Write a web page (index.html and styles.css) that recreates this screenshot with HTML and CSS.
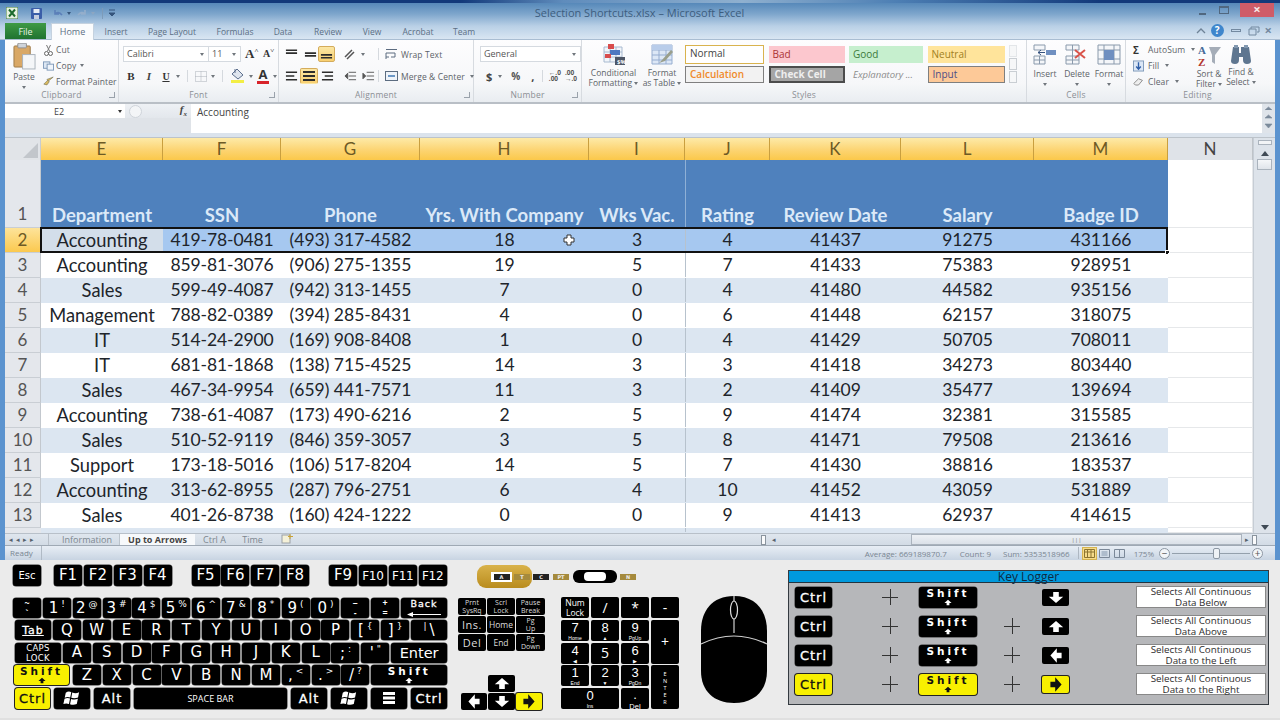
FILE: index.html
```html
<!DOCTYPE html>
<html lang="en">
<head>
<meta charset="utf-8">
<title>Selection Shortcuts.xlsx - Microsoft Excel</title>
<link rel="stylesheet" href="styles.css">
</head>
<body>
<svg class="sprite" width="0" height="0">
  <symbol id="arrow" viewBox="0 0 20 16"><path d="M10 1 19 9H13.500V15H6.500V9H1Z" fill="currentColor"/></symbol>
  <symbol id="win" viewBox="0 0 20 18"><path d="M3 3Q6 1 9.200 2.400L8 8.400Q5 7.200 1.800 8.600ZM10.300 2.800Q14 4.500 18 2.600L16.800 8.400Q13 10 9.200 8.800ZM1.600 9.800Q5 8.400 7.800 9.600L6.600 15.800Q3.500 14.400 .3 15.800ZM9 10Q13 11.400 16.600 9.800L15.400 15.800Q11.500 17.400 7.800 16Z" fill="currentColor"/></symbol>
  <symbol id="lines" viewBox="0 0 14 12"><path d="M1 2H13M1 6H13M1 10H13" stroke="#2d2d2d" stroke-width="1.800"/></symbol>
</svg>

<div class="chrome">
  <div class="titlebar">
    <div class="qat">
      <svg width="12" height="12" viewBox="0 0 12 12"><rect width="12" height="12" fill="#e8f2e0" stroke="#3f7a3f"/><path d="M3 2.500 9 9.500M9 2.500 3 9.500" stroke="#1d6b2e" stroke-width="2"/></svg>
      <svg width="11" height="11" viewBox="0 0 11 11"><rect width="11" height="11" rx="1" fill="#3b5ea8"/><rect x="2.500" y="1" width="6" height="4" fill="#e6ecf5"/><rect x="3" y="7" width="5" height="4" fill="#c6cfdf"/></svg>
      <svg width="10" height="9" viewBox="0 0 10 9"><path d="M2 1V5H6M2 5Q5 1.500 9 6" fill="none" stroke="#5b7fb8" stroke-width="1.600"/></svg>
      <span class="qat-drop"></span>
      <svg width="10" height="9" viewBox="0 0 10 9"><path d="M8 1V5H4M8 5Q5 1.500 1 6" fill="none" stroke="#94aecb" stroke-width="1.600"/></svg>
      <span class="qat-drop faint"></span>
      <span class="qat-sep"></span>
      <svg width="8" height="8" viewBox="0 0 8 8"><path d="M1 1H7M1 4 4 7 7 4Z" fill="#35557c" stroke="#35557c"/></svg>
    </div>
    <div class="doc-title">Selection Shortcuts.xlsx – Microsoft Excel</div>
    <div class="winctl">
      <span class="wc-min"></span>
      <span class="wc-max"></span>
      <span class="wc-close">×</span>
    </div>
  </div>
  <div class="tabbar">
    <span class="tab tab-file">File</span>
    <span class="tab tab-home">Home</span>
    <span class="tab t-insert">Insert</span>
    <span class="tab t-layout">Page Layout</span>
    <span class="tab t-formulas">Formulas</span>
    <span class="tab t-data">Data</span>
    <span class="tab t-review">Review</span>
    <span class="tab t-view">View</span>
    <span class="tab t-acro">Acrobat</span>
    <span class="tab t-team">Team</span>
    <div class="tab-right">
      <svg width="10" height="8" viewBox="0 0 10 8"><path d="M1 6 5 2 9 6" fill="none" stroke="#6f8397" stroke-width="1.300"/></svg>
      <span class="help">?</span>
      <span class="mini-min"></span>
      <svg width="12" height="10" viewBox="0 0 12 10"><path d="M3 3V1H11V6H9M1 3H8V9H1Z" fill="none" stroke="#7389a0"/></svg>
      <span class="mini-x">×</span>
    </div>
  </div>
</div>

<div class="frame">
  <div class="ribbon">
    <section class="group g-clip">
      <div class="gbody">
        <div class="bigbtn paste">
          <svg width="23" height="27" viewBox="0 0 24 28"><rect x="1" y="3" width="17" height="22" rx="1" fill="#d9a866" stroke="#9d7a48"/><rect x="5" y="0" width="9" height="5" rx="1" fill="#cfd4da" stroke="#8d8d8d"/><rect x="10" y="12" width="13" height="15" fill="#f4f6f8" stroke="#a9b2bb"/></svg>
          <span>Paste</span><i class="drop"></i>
        </div>
        <div class="smallcol">
          <div class="sbtn"><svg width="10" height="12" viewBox="0 0 10 12"><path d="M3 1 6 7M7 1 4 7" stroke="#777" /><circle cx="3" cy="9.500" r="2" fill="none" stroke="#666"/><circle cx="7" cy="9.500" r="2" fill="none" stroke="#666"/></svg>Cut</div>
          <div class="sbtn"><svg width="12" height="10" viewBox="0 0 12 10"><rect x=".5" y=".5" width="7" height="7" fill="#dde7f3" stroke="#7d98b8"/><rect x="4.500" y="3" width="7" height="6.500" fill="#f0f5fb" stroke="#7d98b8"/></svg>Copy <i class="drop"></i></div>
          <div class="sbtn"><svg width="14" height="12" viewBox="0 0 14 12"><path d="M13 1 7 6 5 4ZM6 5 1 10 5 11 8 7Z" fill="#d8b85f" stroke="#6a6a50" stroke-width=".7"/></svg>Format Painter</div>
        </div>
      </div>
      <div class="glabel">Clipboard<i class="launch"></i></div>
    </section>

    <section class="group g-font">
      <div class="gbody col">
        <div class="frow">
          <div class="combo c-fn">Calibri<i class="drop"></i></div>
          <div class="combo c-fs">11<i class="drop"></i></div>
          <span class="fontgrow">A<sup>˄</sup></span>
          <span class="fontshrink">A<sup>˅</sup></span>
        </div>
        <div class="frow r2">
          <b class="fb">B</b><i class="fi">I</i><u class="fu">U</u><i class="drop d1"></i>
          <span class="vsep"></span>
          <svg width="12" height="11" viewBox="0 0 12 11"><path d="M.5.500H11.500V10.500H.5ZM6 .5V10.500M.5 5.500H11.500" fill="none" stroke="#aab1b8" stroke-dasharray="1 1"/></svg><i class="drop d2"></i>
          <span class="vsep"></span>
          <svg width="15" height="16" viewBox="0 0 15 16"><path d="M7 1 13 7 8 11 2 6Z" fill="#dfe5ee" stroke="#5d6f8d"/><path d="M5 1V5" stroke="#5d6f8d"/><rect x="1" y="12" width="13" height="3" fill="#f3ee45"/></svg><i class="drop d3"></i>
          <span class="colorA">A</span><i class="drop d4"></i>
        </div>
      </div>
      <div class="glabel">Font<i class="launch"></i></div>
    </section>

    <section class="group g-align">
      <div class="gbody col">
        <div class="frow">
          <svg class="ai" width="13" height="12" viewBox="0 0 14 12"><path d="M1 2H13M1 5H13" stroke="#2d2d2d" stroke-width="1.800"/></svg>
          <svg class="ai" width="13" height="12" viewBox="0 0 14 12"><path d="M1 5H13M1 8H13" stroke="#2d2d2d" stroke-width="1.800"/></svg>
          <span class="ai-on"><svg width="13" height="12" viewBox="0 0 14 12"><path d="M1 7H13M1 10H13" stroke="#2d2d2d" stroke-width="1.800"/></svg></span>
          <svg class="orient" width="16" height="12" viewBox="0 0 16 12"><path d="M2 9 9 2M4 11 11 4" stroke="#555" stroke-width="1.500"/></svg><i class="drop"></i>
          <span class="vsep"></span>
          <div class="sbtn wrap"><svg width="13" height="12" viewBox="0 0 13 12"><path d="M1 1.500H12M1 5H10V9H6M1 9H4M1 5V11" fill="none" stroke="#5c6c80"/></svg>Wrap Text</div>
        </div>
        <div class="frow r2">
          <svg class="ai" width="13" height="12" viewBox="0 0 14 12"><path d="M1 2H13M1 6H10M1 10H13" stroke="#2d2d2d" stroke-width="1.600"/></svg>
          <span class="ai-on c"><svg width="14" height="12" viewBox="0 0 14 12"><use href="#lines"/></svg></span>
          <svg class="ai" width="13" height="12" viewBox="0 0 14 12"><path d="M1 2H13M4 6H13M1 10H13" stroke="#2d2d2d" stroke-width="1.600"/></svg>
          <svg class="ind1" width="13" height="12" viewBox="0 0 14 12"><path d="M5 2H13M5 6H13M5 10H13M1 6 4 3V9Z" fill="#555" stroke="#555"/></svg>
          <svg class="ind2" width="13" height="12" viewBox="0 0 14 12"><path d="M5 2H13M5 6H13M5 10H13M4 6 1 3V9Z" fill="#555" stroke="#555"/></svg>
          <span class="vsep"></span>
          <div class="sbtn wrap"><svg width="13" height="12" viewBox="0 0 13 12"><rect x=".5" y="1.500" width="12" height="9" fill="#eef3f9" stroke="#5c6c80"/><path d="M3 6H10" stroke="#3f78b5" stroke-width="1.500"/></svg>Merge &amp; Center <i class="drop"></i></div>
        </div>
      </div>
      <div class="glabel">Alignment<i class="launch"></i></div>
    </section>

    <section class="group g-num">
      <div class="gbody col">
        <div class="frow"><div class="combo c-num">General<i class="drop"></i></div></div>
        <div class="frow r2 numtools">
          <b class="dollar">$</b><i class="drop"></i>
          <b class="pct">%</b>
          <b class="comma">,</b>
          <span class="vsep"></span>
          <small class="dec">←.0<br>.00</small>
          <small class="dec">.00<br>→.0</small>
        </div>
      </div>
      <div class="glabel">Number<i class="launch"></i></div>
    </section>

    <section class="group g-styles">
      <div class="gbody">
        <div class="bigbtn cf">
          <svg width="24" height="21" viewBox="0 0 24 21"><path d="M2 3H20V18H2ZM2 8H20M2 13H20M8 3V18M14 3V18" fill="#f1f5fa" stroke="#a8bad0"/><rect x="6" y="0" width="6" height="5" fill="#d84c4c"/><rect x="8" y="6" width="10" height="5" fill="#4d77c0"/><rect x="3" y="10" width="6" height="4" fill="#d84c4c"/><rect x="13" y="13" width="10" height="8" fill="#4d5666"/><text x="15" y="20" class="svgt">$%</text></svg>
          <span>Conditional<br>Formatting <i class="drop"></i></span>
        </div>
        <div class="bigbtn ft">
          <svg width="24" height="21" viewBox="0 0 24 21"><path d="M2 1H22V20H2ZM2 6H22M2 11H22M2 16H22M9 1V20M16 1V20" fill="#dce7f6" stroke="#96add0"/><rect x="2" y="1" width="20" height="5" fill="#b9cdea"/><path d="M21 6 12 16 9 19 15 17 23 8Z" fill="#9a9f8c"/></svg>
          <span>Format<br>as Table <i class="drop"></i></span>
        </div>
        <div class="gallery">
          <div class="stl s-normal">Normal</div>
          <div class="stl s-bad">Bad</div>
          <div class="stl s-good">Good</div>
          <div class="stl s-neutral">Neutral</div>
          <div class="stl s-calc">Calculation</div>
          <div class="stl s-check">Check Cell</div>
          <div class="stl s-expl">Explanatory ...</div>
          <div class="stl s-input">Input</div>
        </div>
        <div class="galscroll"><span></span><span class="on"></span><span class="on more"></span></div>
      </div>
      <div class="glabel">Styles</div>
    </section>

    <section class="group g-cells">
      <div class="gbody">
        <div class="bigbtn cellb">
          <svg width="24" height="21" viewBox="0 0 24 21"><path d="M1 1H12V6H1ZM1 12H12V20H1ZM6.500 12V20M1 16H12" fill="#f4f6f9" stroke="#8a9aac"/><rect x="13" y="6" width="10" height="5" fill="#6f8fc0"/><path d="M12 8.500H5M8 6 5 8.500 8 11" fill="none" stroke="#35527e"/></svg>
          <span>Insert</span><i class="drop"></i>
        </div>
        <div class="bigbtn cellb">
          <svg width="24" height="21" viewBox="0 0 24 21"><path d="M1 1H14V6H1ZM1 12H14V20H1ZM7.500 1V20M1 16H14" fill="#f4f6f9" stroke="#8a9aac"/><path d="M10 6 20 14M20 6 10 14" stroke="#d9534a" stroke-width="2"/></svg>
          <span>Delete</span><i class="drop"></i>
        </div>
        <div class="bigbtn cellb">
          <svg width="24" height="21" viewBox="0 0 24 21"><path d="M1 1H23V20H1ZM7 1V20M17 1V20M1 6H23M1 15H23" fill="#f4f6f9" stroke="#8a9aac"/><rect x="7" y="6" width="10" height="10" fill="#6f8fc0"/></svg>
          <span>Format</span><i class="drop"></i>
        </div>
      </div>
      <div class="glabel">Cells</div>
    </section>

    <section class="group g-edit">
      <div class="gbody">
        <div class="smallcol edit">
          <div class="sbtn"><span class="sigma">Σ</span>AutoSum <i class="drop"></i></div>
          <div class="sbtn"><svg width="12" height="12" viewBox="0 0 12 12"><rect x=".5" y=".5" width="11" height="11" fill="#dbe7f6" stroke="#7d98b8"/><path d="M6 2V9M3.500 6.500 6 9.500 8.500 6.500" fill="none" stroke="#2f5ea8" stroke-width="1.500"/></svg>Fill <i class="drop"></i></div>
          <div class="sbtn"><svg width="14" height="11" viewBox="0 0 14 11"><path d="M1 8 7 2 12 4 7 10H3Z" fill="#eee" stroke="#777"/></svg>Clear <i class="drop"></i></div>
        </div>
        <div class="bigbtn sortb">
          <svg width="24" height="23" viewBox="0 0 24 23"><path d="M12 3H24L18 11V20L15 18V11Z" fill="#a5adb8"/><text x="1" y="10" class="svgAZ a">A</text><text x="1" y="22" class="svgAZ z">Z</text></svg>
          <span>Sort &amp;<br>Filter <i class="drop"></i></span>
        </div>
        <div class="bigbtn sortb">
          <svg width="22" height="21" viewBox="0 0 22 21"><path d="M3 3H9V9H11V3H19L21 17Q21 20 17 20Q13 20 13 16V13H9V16Q9 20 5 20Q1 20 1 17Z" fill="#5e7690"/><rect x="4" y="1" width="4" height="3" fill="#8298b0"/><rect x="14" y="1" width="4" height="3" fill="#8298b0"/></svg>
          <span>Find &amp;<br>Select <i class="drop"></i></span>
        </div>
      </div>
      <div class="glabel">Editing</div>
    </section>
  </div>

  <div class="formulabar">
    <div class="fb-left">
      <div class="fb-top">
        <div class="namebox">E2<i class="drop dark"></i></div>
        <div class="fb-btns"><span class="cancel"></span><span class="fx">f<sub>x</sub></span></div>
      </div>
    </div>
    <div class="fb-input">Accounting</div>
    <div class="fb-scroll"><svg width="9" height="26" viewBox="0 0 9 26"><path d="M1 5 4.500 2 8 5M1 13 4.500 10 8 13H1ZM1 19H8L4.500 23Z" fill="#7b8a9b" stroke="#7b8a9b" stroke-width=".6"/></svg></div>
  </div>

  <div class="gridwrap">
    <div class="sheet">
      <div class="row colhead">
        <div class="corner"><span class="tri"></span></div>
        <div class="ch on">E</div><div class="ch on">F</div><div class="ch on">G</div><div class="ch on">H</div><div class="ch on">I</div><div class="ch on">J</div><div class="ch on">K</div><div class="ch on">L</div><div class="ch on">M</div><div class="ch">N</div>
      </div>
      <div class="row r-head">
        <div class="rh">1</div>
        <div class="hc">Department</div><div class="hc">SSN</div><div class="hc">Phone</div><div class="hc">Yrs. With Company</div><div class="hc">Wks Vac.</div><div class="hc sepl">Rating</div><div class="hc">Review Date</div><div class="hc">Salary</div><div class="hc">Badge ID</div><div class="empty"></div>
      </div>
      <div class="row selrow">
        <div class="rh on">2</div>
        <div class="c active">Accounting</div><div class="c">419-78-0481</div><div class="c">(493) 317-4582</div><div class="c">18</div><div class="c">3</div><div class="c sepl">4</div><div class="c">41437</div><div class="c">91275</div><div class="c">431166</div><div class="empty"></div>
        <div class="selbox"><span class="handle"></span></div>
        <svg class="cursor" width="12" height="12" viewBox="0 0 12 12"><path d="M4 1H8V4H11V8H8V11H4V8H1V4H4Z" fill="#fff" stroke="#333"/></svg>
      </div>
      <div class="row">
        <div class="rh">3</div>
        <div class="c">Accounting</div><div class="c">859-81-3076</div><div class="c">(906) 275-1355</div><div class="c">19</div><div class="c">5</div><div class="c sepl">7</div><div class="c">41433</div><div class="c">75383</div><div class="c">928951</div><div class="empty"></div>
      </div>
      <div class="row band">
        <div class="rh">4</div>
        <div class="c">Sales</div><div class="c">599-49-4087</div><div class="c">(942) 313-1455</div><div class="c">7</div><div class="c">0</div><div class="c sepl">4</div><div class="c">41480</div><div class="c">44582</div><div class="c">935156</div><div class="empty"></div>
      </div>
      <div class="row">
        <div class="rh">5</div>
        <div class="c">Management</div><div class="c">788-82-0389</div><div class="c">(394) 285-8431</div><div class="c">4</div><div class="c">0</div><div class="c sepl">6</div><div class="c">41448</div><div class="c">62157</div><div class="c">318075</div><div class="empty"></div>
      </div>
      <div class="row band">
        <div class="rh">6</div>
        <div class="c">IT</div><div class="c">514-24-2900</div><div class="c">(169) 908-8408</div><div class="c">1</div><div class="c">0</div><div class="c sepl">4</div><div class="c">41429</div><div class="c">50705</div><div class="c">708011</div><div class="empty"></div>
      </div>
      <div class="row">
        <div class="rh">7</div>
        <div class="c">IT</div><div class="c">681-81-1868</div><div class="c">(138) 715-4525</div><div class="c">14</div><div class="c">3</div><div class="c sepl">3</div><div class="c">41418</div><div class="c">34273</div><div class="c">803440</div><div class="empty"></div>
      </div>
      <div class="row band">
        <div class="rh">8</div>
        <div class="c">Sales</div><div class="c">467-34-9954</div><div class="c">(659) 441-7571</div><div class="c">11</div><div class="c">3</div><div class="c sepl">2</div><div class="c">41409</div><div class="c">35477</div><div class="c">139694</div><div class="empty"></div>
      </div>
      <div class="row">
        <div class="rh">9</div>
        <div class="c">Accounting</div><div class="c">738-61-4087</div><div class="c">(173) 490-6216</div><div class="c">2</div><div class="c">5</div><div class="c sepl">9</div><div class="c">41474</div><div class="c">32381</div><div class="c">315585</div><div class="empty"></div>
      </div>
      <div class="row band">
        <div class="rh">10</div>
        <div class="c">Sales</div><div class="c">510-52-9119</div><div class="c">(846) 359-3057</div><div class="c">3</div><div class="c">5</div><div class="c sepl">8</div><div class="c">41471</div><div class="c">79508</div><div class="c">213616</div><div class="empty"></div>
      </div>
      <div class="row">
        <div class="rh">11</div>
        <div class="c">Support</div><div class="c">173-18-5016</div><div class="c">(106) 517-8204</div><div class="c">14</div><div class="c">5</div><div class="c sepl">7</div><div class="c">41430</div><div class="c">38816</div><div class="c">183537</div><div class="empty"></div>
      </div>
      <div class="row band">
        <div class="rh">12</div>
        <div class="c">Accounting</div><div class="c">313-62-8955</div><div class="c">(287) 796-2751</div><div class="c">6</div><div class="c">4</div><div class="c sepl">10</div><div class="c">41452</div><div class="c">43059</div><div class="c">531889</div><div class="empty"></div>
      </div>
      <div class="row">
        <div class="rh">13</div>
        <div class="c">Sales</div><div class="c">401-26-8738</div><div class="c">(160) 424-1222</div><div class="c">0</div><div class="c">0</div><div class="c sepl">9</div><div class="c">41413</div><div class="c">62937</div><div class="c">414615</div><div class="empty"></div>
      </div>
      <div class="row band stub">
        <div class="rh"></div>
        <div class="c"></div><div class="c"></div><div class="c"></div><div class="c"></div><div class="c"></div><div class="c sepl"></div><div class="c"></div><div class="c"></div><div class="c"></div><div class="empty"></div>
      </div>
    </div>
    <div class="vscroll">
      <span class="vs-split"></span>
      <span class="vs-up"></span>
      <span class="vs-thumb"></span>
      <span class="vs-track"></span>
      <span class="vs-down"></span>
    </div>
  </div>

  <div class="sheetbar">
    <div class="sheetnav">
      <span>◂</span><span>◂</span><span>▸</span><span>▸</span>
    </div>
    <span class="stab s-info">Information</span>
    <span class="stab s-up">Up to Arrows</span>
    <span class="stab s-a">Ctrl A</span>
    <span class="stab s-time">Time</span>
    <span class="stab s-new"><svg width="13" height="10" viewBox="0 0 13 10"><rect x="1" y="1" width="8" height="8" fill="#f5f1d8" stroke="#9aa0a6"/><path d="M9 0V5M7 2.500H12" stroke="#c9a233"/></svg></span>
    <div class="hs-left">
      <span class="hs-split"></span>
      <span class="hs-arrow">◂</span>
    </div>
    <div class="hs-track"><span class="grip">|||</span></div>
    <div class="hs-right"><span class="hs-arrow">▸</span><span class="hs-split"></span></div>
  </div>

  <div class="statusbar">
    <span class="ready">Ready</span>
    <div class="stat-right">
      <span class="st-avg">Average: 669189870.7</span>
      <span class="st-count">Count: 9</span>
      <span class="st-sum">Sum: 5353518966</span>
      <span class="st-sep"></span>
      <span class="view on"><svg width="11" height="9" viewBox="0 0 11 9"><path d="M.5.500H10.500V8.500H.5ZM.5 3H10.500M3.500.5V8.500M7 .5V8.500" fill="none" stroke="#8c7530"/></svg></span>
      <span class="view"><svg width="11" height="9" viewBox="0 0 11 9"><path d="M.5.500H10.500V8.500H.5Z" fill="none" stroke="#7b8898"/><rect x="2.500" y="2" width="6" height="5" fill="#aebccc"/></svg></span>
      <span class="view"><svg width="11" height="9" viewBox="0 0 11 9"><path d="M.5.500H10.500V8.500H.5ZM5.500.5V8.500" fill="none" stroke="#7b8898"/></svg></span>
      <span class="zoomv">175%</span>
      <span class="zbtn">−</span>
      <span class="zline"><span class="zknob"></span></span>
      <span class="zbtn">+</span>
    </div>
  </div>
</div>

<div class="panel">
  <div class="kb">
    <div class="kr fn">
      <div class="key w28 esc">Esc</div>
      <div class="fgroup">
        <div class="key w28">F1</div><div class="key w28">F2</div><div class="key w28">F3</div><div class="key w28">F4</div>
      </div>
      <div class="fgroup">
        <div class="key w28">F5</div><div class="key w28">F6</div><div class="key w28">F7</div><div class="key w28">F8</div>
      </div>
      <div class="fgroup">
        <div class="key w28">F9</div><div class="key w28 f2d">F10</div><div class="key w28 f2d">F11</div><div class="key w28 f2d">F12</div>
      </div>
    </div>
    <div class="kr num">
      <div class="key w28 stack2">~<br>`</div>
      <div class="key w28 sym"><b>1</b><i>!</i></div>
      <div class="key w28 sym"><b>2</b><i>@</i></div>
      <div class="key w28 sym"><b>3</b><i>#</i></div>
      <div class="key w28 sym"><b>4</b><i>$</i></div>
      <div class="key w28 sym"><b>5</b><i>%</i></div>
      <div class="key w28 sym"><b>6</b><i>^</i></div>
      <div class="key w28 sym"><b>7</b><i>&amp;</i></div>
      <div class="key w28 sym"><b>8</b><i>*</i></div>
      <div class="key w28 sym"><b>9</b><i>(</i></div>
      <div class="key w28 sym"><b>0</b><i>)</i></div>
      <div class="key w28 stack2">–<br>-</div>
      <div class="key w28 stack2">+<br>=</div>
      <div class="key w46 wide back">Back<svg width="34" height="5" viewBox="0 0 34 5"><path d="M0 2.500 6 0V2H34V3H6V5Z" fill="#fff"/></svg></div>
    </div>
    <div class="kr">
      <div class="key w36 wide tabk"><u>Tab</u></div>
      <div class="key w28">Q</div><div class="key w28">W</div><div class="key w28">E</div><div class="key w28">R</div><div class="key w28">T</div><div class="key w28">Y</div><div class="key w28">U</div><div class="key w28">I</div><div class="key w28">O</div><div class="key w28">P</div>
      <div class="key w28 sym"><b>[</b><i>{</i></div>
      <div class="key w28 sym"><b>]</b><i>}</i></div>
      <div class="key w36 sym"><i>|</i><b>\</b></div>
    </div>
    <div class="kr">
      <div class="key w46 caps">CAPS<br>LOCK</div>
      <div class="key w28">A</div><div class="key w28">S</div><div class="key w28">D</div><div class="key w28">F</div><div class="key w28">G</div><div class="key w28">H</div><div class="key w28">J</div><div class="key w28">K</div><div class="key w28">L</div>
      <div class="key w28 sym"><b>;</b><i>:</i></div>
      <div class="key w28 sym"><b>'</b><i>"</i></div>
      <div class="key w56 enter">Enter</div>
    </div>
    <div class="kr r5">
      <div class="key w55 wide shift yel">Shift<svg width="8" height="7"><use href="#arrow"/></svg></div>
      <div class="key w28">Z</div><div class="key w28">X</div><div class="key w28">C</div><div class="key w28">V</div><div class="key w28">B</div><div class="key w28">N</div><div class="key w28">M</div>
      <div class="key w28 sym"><b>,</b><i>&lt;</i></div>
      <div class="key w28 sym"><b>.</b><i>&gt;</i></div>
      <div class="key w28 sym"><b>/</b><i>?</i></div>
      <div class="key w76 wide shift">Shift<svg width="8" height="7"><use href="#arrow"/></svg></div>
    </div>
    <div class="kr bottom">
      <div class="key w35 wide yel">Ctrl</div>
      <div class="key w36"><svg width="18" height="16"><use href="#win"/></svg></div>
      <div class="key w36 wide">Alt</div>
      <div class="key space">SPACE BAR</div>
      <div class="key w36 wide">Alt</div>
      <div class="key w36"><svg width="18" height="16"><use href="#win"/></svg></div>
      <div class="key w36"><svg width="14" height="14" viewBox="0 0 14 14"><path d="M1 1H13V4H1ZM1 5.500H13V8.500H1ZM1 10H13V13H1Z" fill="#fff"/></svg></div>
      <div class="key w36 wide">Ctrl</div>
    </div>
  </div>

  <div class="mid">
    <div class="goldrow">
      <div class="blob"><span class="blobwhite"><span class="mk bk">A</span></span><span class="mk gd">T</span></div>
      <span class="mk bk m1">C</span>
      <span class="mk gd m2">PT</span>
      <span class="pill"><span></span></span>
      <span class="mk gd m3">N</span>
    </div>
    <div class="midgrid">
      <div class="navcol">
        <div class="navgrid">
          <div class="nk tiny">Prnt<br>SysRq</div><div class="nk tiny">Scrl<br>Lock</div><div class="nk tiny">Pause<br>Break</div>
          <div class="nk big">Ins.</div><div class="nk home">Home</div><div class="nk tiny">Pg<br>Up</div>
          <div class="nk big">Del</div><div class="nk home">End</div><div class="nk tiny">Pg<br>Down</div>
        </div>
        <div class="arrows">
          <div class="ak ak-up"><svg width="16" height="13"><use href="#arrow"/></svg></div>
          <div class="ak ak-l"><svg class="rot-l" width="16" height="13"><use href="#arrow"/></svg></div>
          <div class="ak ak-d"><svg class="rot-d" width="16" height="13"><use href="#arrow"/></svg></div>
          <div class="ak ak-r yel"><svg class="rot-r" width="16" height="13"><use href="#arrow"/></svg></div>
        </div>
      </div>
      <div class="numpad">
        <div class="pk sm2">Num<br>Lock</div><div class="pk">/</div><div class="pk">*</div><div class="pk">-</div>
        <div class="pk lab">7<small>Home</small></div><div class="pk lab">8<small>▲</small></div><div class="pk lab">9<small>PgUp</small></div><div class="pk tall">+</div>
        <div class="pk lab">4<small>◀</small></div><div class="pk">5</div><div class="pk lab">6<small>▶</small></div>
        <div class="pk lab">1<small>End</small></div><div class="pk lab">2<small>▼</small></div><div class="pk lab">3<small>PgDn</small></div><div class="pk tall ent">E<br>N<br>T<br>E<br>R</div>
        <div class="pk lab dbl">0<small>Ins</small></div><div class="pk lab">.<small class="del">Del</small></div>
      </div>
    </div>
  </div>

  <svg class="mouse" width="68" height="109" viewBox="0 0 68 109">
    <path d="M34 1C12 1 1 16 1 36V76C1 96 14 108 34 108S67 96 67 76V36C67 16 56 1 34 1Z" fill="#000"/>
    <path d="M1 49Q34 33 67 49M34 1V6M34 24V38" fill="none" stroke="#cfcfcf" stroke-width="1.200"/>
    <ellipse cx="34" cy="15" rx="3.500" ry="9" fill="none" stroke="#dcdcdc" stroke-width="1.200"/>
  </svg>

  <div class="logger">
    <div class="lg-head">Key Logger</div>
    <div class="lg-body">
      <div class="lg-row">
        <div class="key lk-ctrl wide">Ctrl</div><span class="plus p1"></span>
        <div class="key lk-shift wide shift">Shift<svg width="8" height="7"><use href="#arrow"/></svg></div><span class="plus p2 hide"></span>
        <div class="ak lk-arrow"><svg class="rot-d" width="16" height="13"><use href="#arrow"/></svg></div>
        <div class="desc">Selects All Continuous<br>Data Below</div>
      </div>
      <div class="lg-row">
        <div class="key lk-ctrl wide">Ctrl</div><span class="plus p1"></span>
        <div class="key lk-shift wide shift">Shift<svg width="8" height="7"><use href="#arrow"/></svg></div><span class="plus p2"></span>
        <div class="ak lk-arrow"><svg width="16" height="13"><use href="#arrow"/></svg></div>
        <div class="desc">Selects All Continuous<br>Data Above</div>
      </div>
      <div class="lg-row">
        <div class="key lk-ctrl wide">Ctrl</div><span class="plus p1"></span>
        <div class="key lk-shift wide shift">Shift<svg width="8" height="7"><use href="#arrow"/></svg></div><span class="plus p2"></span>
        <div class="ak lk-arrow"><svg class="rot-l" width="16" height="13"><use href="#arrow"/></svg></div>
        <div class="desc">Selects All Continuous<br>Data to the Left</div>
      </div>
      <div class="lg-row">
        <div class="key lk-ctrl wide yel">Ctrl</div><span class="plus p1"></span>
        <div class="key lk-shift wide shift yel">Shift<svg width="8" height="7"><use href="#arrow"/></svg></div><span class="plus p2"></span>
        <div class="ak lk-arrow yel"><svg class="rot-r" width="16" height="13"><use href="#arrow"/></svg></div>
        <div class="desc">Selects All Continuous<br>Data to the Right</div>
      </div>
    </div>
  </div>
</div>
</body>
</html>
```

FILE: styles.css
```css
* { box-sizing: border-box; }
html, body { margin: 0; padding: 0; }
body {
  width: 1280px; height: 720px; overflow: hidden;
  font-family: "Open Sans", "Noto Sans", sans-serif;
  background: #ebebeb; color: #333;
}
.sprite { display: block; height: 0; }
i, b, u { font-style: normal; }

/* title + tabs */
.chrome {
  height: 40px; padding-top: 3px;
  background:
    linear-gradient(90deg, #12397a 0, #12397a 36%, #5f8cbc 44%, #8fb0cf 58%, #4d7fb4 70%, #12397a 86%, #12397a 100%) top / 100% 3px no-repeat,
    linear-gradient(#4b80b4 0, #7ea6cc 14px, #b9d0e6 26px, #dbe7f3 40px);
}
.titlebar { height: 20px; display: flex; align-items: center; padding: 0 6px; position: relative; }
.qat { display: flex; align-items: center; gap: 4px; width: 440px; }
.qat svg:nth-child(2) { margin-left: 9px; }
.qat svg:nth-child(3) { margin-left: 7px; }
.qat-drop { width: 0; height: 0; border: 2px solid transparent; border-top: 3px solid #35557c; border-bottom: 0; margin-right: 2px; }
.qat-drop.faint { border-top-color: #8ca6c2; }
.qat-sep { width: 1px; height: 11px; background: #7d9bb9; margin: 0 1px; }
.doc-title { width: 305px; margin-left: 41px; text-align: center; font-size: 11px; color: #3d5d7e; padding-bottom: 1px; }
.winctl { margin-left: auto; display: flex; align-items: flex-start; height: 20px; margin-top: -1px; }
.wc-min { width: 7px; height: 2px; background: #50677f; margin: 10px 13px 0 0; }
.wc-max { width: 10px; height: 8px; border: 1px solid #50677f; border-top-width: 2px; margin: 3px 11px 0 0; }
.wc-close { width: 34px; height: 14px; background: #cf5c68; color: #f6e6e6; font-size: 13px; font-weight: 700; text-align: center; line-height: 13px; }

.tabbar { height: 17px; display: flex; position: relative; padding-left: 5px; border-bottom: 1px solid #a9bdd2; }
.tab { font-size: 8.500px; line-height: 17px; color: #5c6f84; white-space: nowrap; text-align: center; flex: none; }
.tab-file { width: 41px; background: linear-gradient(#3f9a45, #1f7330); color: #e5f2e5; font-size: 9px; }
.tab-home { width: 43px; margin-left: 5px; background: #fbfcfd; border: 1px solid #c5d2df; border-bottom: 0; height: 17px; line-height: 15px; font-size: 9px; }
.t-insert { width: 44px; }
.t-layout { width: 68px; }
.t-formulas { width: 58px; }
.t-data { width: 38px; }
.t-review { width: 52px; }
.t-view { width: 36px; }
.t-acro { width: 56px; }
.t-team { width: 36px; }
.tab-right { margin-left: auto; display: flex; align-items: center; gap: 5px; padding-right: 8px; height: 15px; }
.help { width: 13px; height: 13px; border-radius: 50%; background: #3f86cc; color: #fff; font-size: 10px; font-weight: 700; text-align: center; line-height: 13px; }
.mini-min { width: 10px; height: 3px; border: 1px solid #7389a0; margin: 0 2px; }
.mini-x { font-size: 13px; line-height: 13px; color: #7389a0; font-weight: 700; }

.frame { border-left: 5px solid #5b93cf; border-right: 5px solid #5b93cf; height: 520px; background: #dbe3ec; display: flex; flex-direction: column; }

/* ribbon */
.ribbon { height: 64px; display: flex; background: linear-gradient(#fdfdfe, #f6f7f9 70%, #e9edf1); border-bottom: 2px solid #b9bfc6; flex: none; }
.group { display: flex; flex-direction: column; border-right: 1px solid #d7dbe0; flex: none; position: relative; }
.gbody { flex: 1; display: flex; min-height: 0; }
.gbody.col { flex-direction: column; padding-top: 6px; }
.glabel { height: 12px; font-size: 8.500px; line-height: 11px; text-align: center; color: #8b8f94; flex: none; position: relative; letter-spacing: .2px; margin-bottom: 1px; }
.launch { position: absolute; right: 3px; top: 3px; width: 6px; height: 6px; border-right: 1px solid #9aa2ab; border-bottom: 1px solid #9aa2ab; }
.drop { display: inline-block; width: 0; height: 0; border: 2px solid transparent; border-top: 3px solid #70767c; border-bottom: 0; vertical-align: middle; }
.drop.dark { border-top-color: #333; }
.g-clip { width: 114px; }
.g-font { width: 160px; }
.g-align { width: 195px; }
.g-num { width: 108px; }
.g-styles { width: 445px; }
.g-cells { width: 99px; }
.g-edit { width: 143px; border-right: 0; }

.bigbtn { display: flex; flex-direction: column; align-items: center; font-size: 8.500px; line-height: 9.500px; color: #5d6368; text-align: center; flex: none; }
.paste { width: 38px; padding-top: 3px; }
.paste span { margin-top: 2px; }
.paste .drop { margin-top: 4px; }
.smallcol { display: flex; flex-direction: column; padding-top: 2px; }
.sbtn { display: flex; align-items: center; gap: 2px; height: 16px; font-size: 8.500px; color: #5d6368; white-space: nowrap; letter-spacing: .1px; }
.smallcol .sbtn svg { width: 11px; flex: none; }
.sbtn .drop { margin-left: 2px; }

.frow { height: 16px; display: flex; align-items: center; flex: none; padding-left: 4px; }
.frow.r2 { margin-top: 5px; height: 18px; }
.combo { height: 16px; background: #fff; border: 1px solid #d5dae0; font-size: 9px; line-height: 14px; padding-left: 3px; color: #555; position: relative; }
.combo .drop { position: absolute; right: 4px; top: 6px; }
.c-fn { width: 85px; border-right: 0; }
.c-fs { width: 33px; }
.fontgrow { margin-left: 4px; font: 700 13px/14px "Liberation Serif", serif; color: #333; width: 15px; }
.fontshrink { margin-left: 3px; font: 700 10px/14px "Liberation Serif", serif; color: #333; }
.fontgrow sup, .fontshrink sup { font-size: 7px; line-height: 0; }
.g-font .r2 { padding-left: 3px; }
.fb { font: 700 11px "Liberation Serif", serif; color: #333; width: 18px; text-align: center; }
.fi { font: italic 700 11px "Liberation Serif", serif; font-style: italic; color: #444; width: 18px; text-align: center; }
.fu { font: 700 10px "Liberation Serif", serif; color: #333; width: 16px; text-align: center; }
.d1 { margin-left: 2px; }
.vsep { width: 1px; height: 12px; background: #d5d9de; margin: 0 7px; flex: none; }
.d2 { margin-left: 4px; }
.d3 { margin-left: 4px; }
.colorA { font: 700 13px/13px "Open Sans", sans-serif; color: #333; border-bottom: 3px solid #d8232a; margin-left: 4px; width: 12px; text-align: center; }
.d4 { margin-left: 4px; }

.g-align .frow { padding-left: 3px; }
.ai { margin: 0 3px; flex: none; }
.ai-on { display: flex; align-items: center; justify-content: center; width: 17px; height: 16px; background: linear-gradient(#fbe7a5, #f8cf70); border: 1px solid #d4ac5c; border-radius: 2px; margin-left: -2px; flex: none; }
.ai-on.c { width: 18px; margin-left: -1px; }
.orient { margin-left: 8px; }
.g-align .drop { margin-left: 2px; }
.g-align .frow .vsep { margin: 0 6px 0 3px; }
.g-align .frow:first-child .vsep { margin-left: 13px; }
.ind1 { margin-left: 7px; flex: none; }
.ind2 { margin-left: 5px; flex: none; }
.sbtn.wrap { gap: 3px; }

.g-num .frow { padding-left: 6px; }
.c-num { width: 102px; }
.g-num .numtools { padding-left: 12px; color: #444; }
.dollar { font-size: 11px; width: 11px; color: #444; }
.numtools .drop { margin-left: 3px; }
.pct { font-size: 10px; margin-left: 9px; width: 14px; color: #555; }
.comma { font-size: 11px; margin-left: 8px; width: 9px; }
.numtools .vsep { margin: 0 6px 0 3px; }
.dec { font-size: 6.500px; line-height: 6.500px; width: 19px; color: #555; font-weight: 700; }

.cf { width: 61px; margin-left: 1px; padding-top: 4px; }
.ft { width: 36px; padding-top: 4px; white-space: nowrap; }
.cf span, .ft span { margin-top: 3px; }
.svgt { font-size: 6px; fill: #fff; font-weight: 700; }
.gallery { width: 321px; margin: 6px 0 0 5px; display: grid; grid-template-columns: 79px 76px 74px 77px; column-gap: 4.500px; row-gap: 3px; grid-auto-rows: 17px; align-content: start; }
.stl { font-size: 10px; line-height: 15px; padding-left: 4px; white-space: nowrap; }
.s-normal { background: #fff; border: 1px solid #d9b34e; color: #444; height: 19px; margin-top: -1px; }
.s-bad { background: #fcc7ce; color: #a33; padding-top: 1px; }
.s-good { background: #c6efce; color: #3b7a3b; padding-top: 1px; }
.s-neutral { background: #ffe49b; color: #a17f1f; padding-top: 1px; }
.s-calc { background: #f2f2f2; border: 1px solid #7f7f7f; color: #f08a2a; font-weight: 600; }
.s-check { background: #a5a5a5; border: 2px solid #4c4c4c; color: #eee; font-weight: 700; line-height: 13px; }
.s-expl { color: #8c8c8c; font-style: italic; padding-top: 1px; font-size: 9.500px; }
.s-input { background: #fdc998; border: 1px solid #7f7f7f; color: #4d4d85; }
.galscroll { width: 8px; margin: 5px 0 0 3px; display: flex; flex-direction: column; gap: 1px; }
.galscroll span { height: 12px; border: 1px solid #e3e6e9; background: #f6f7f8; }
.galscroll .on { border-color: #c9ced3; }
.cellb { width: 32px; padding-top: 4px; }
.cellb span { margin-top: 4px; }
.cellb .drop { margin-top: 4px; }
.g-cells .gbody { padding-left: 2px; }
.smallcol.edit { width: 67px; padding-left: 7px; }
.sigma { font-size: 10px; font-weight: 700; width: 11px; color: #333; flex: none; }
.edit .sbtn { gap: 4px; }
.sortb { width: 32px; padding-top: 4px; }
.sortb span { margin-top: 2px; }
.svgAZ { font: 700 11px "Liberation Serif", serif; }
.svgAZ.a { fill: #456a99; }
.svgAZ.z { fill: #b3362e; }

/* formula bar */
.formulabar { height: 29px; display: flex; flex: none; }
.fb-left { width: 186px; background: #dfe3e8; }
.fb-top { display: flex; height: 14px; background: #fff; }
.namebox { width: 120px; font-size: 9px; line-height: 15px; text-align: center; color: #444; position: relative; padding-right: 12px; }
.namebox .drop { position: absolute; right: 3px; top: 6px; }
.fb-btns { flex: 1; background: linear-gradient(#eef1f5, #e3e7ec); display: flex; align-items: center; justify-content: space-between; padding: 0 4px; }
.cancel { width: 13px; height: 13px; border-radius: 50%; border: 1px solid #cfd4da; background: #f3f5f7; }
.fx { font: italic 700 11px "Liberation Serif", serif; color: #444; }
.fx sub { font-size: 7px; }
.fb-input { flex: 1; background: #fff; font-size: 10px; padding: 0 6px; line-height: 16px; color: #444; }
.fb-scroll { width: 13px; background: #dfe4ea; padding: 1px 2px; }

/* grid */
.gridwrap { margin-top: 4px; display: flex; height: 396px; flex: none; border-top: 1px solid #bcc3ca; background: #fff; }
.sheet { width: 1248px; flex: none; overflow: hidden; }
.row { display: grid; grid-template-columns: 36px 122px 118px 139px 169px 96px 85px 131px 133px 134px 85px; height: 25px; position: relative; font-family: Lato, "Open Sans", sans-serif; font-size: 17.500px; color: #20242a; }
.row .c:nth-child(2) { font-size: 18.300px; }
.row .c:nth-child(3) { letter-spacing: -.12px; }
.colhead { height: 22px; }
.corner { background: #e1e4e8; position: relative; border-right: 1px solid #c8ccd1; }
.tri { position: absolute; right: 2px; bottom: 2px; width: 0; height: 0; border-left: 15px solid transparent; border-bottom: 15px solid #c2c6cb; }
.ch { background: #dfe3e8; color: #444; text-align: center; line-height: 22px; font-size: 17px; border-right: 1px solid #bec3c8; }
.ch.on { background: linear-gradient(#fdeaa8 0, #fcd472 55%, #fbc84a); color: #6d5a25; border-right: 1px solid #c99f3f; }
.rh { background: #e4e7ec; color: #555; text-align: center; font-size: 17px; line-height: 24px; border-bottom: 1px solid #c9ced4; border-right: 1px solid #c3c8ce; display: flex; align-items: flex-end; justify-content: center; }
.rh.on { background: linear-gradient(#fde39a, #fbc94f); color: #6d5a25; }
.r-head { height: 68px; }
.hc { background: #4f81bd; color: #dbe9f8; font-weight: 700; font-size: 18.500px; text-align: center; line-height: 24px; align-self: stretch; display: flex; align-items: flex-end; justify-content: center; white-space: nowrap; padding-bottom: 1px; }
.r-head .rh { padding-bottom: 1px; }
.c { text-align: center; line-height: 24px; white-space: nowrap; border-bottom: 1px solid transparent; }
.empty { border-bottom: 1px solid #e6e8ea; border-right: 1px solid #e6e8ea; background: #fff; }
.band .c { background: #dce6f1; }
.sepl { box-shadow: inset 1px 0 0 #b7c2cd; }
.hc.sepl { box-shadow: inset 1px 0 0 #8fb0d6; }
.selrow .c { background: #a6c8f0; }
.selrow .c.active { background: #d3deea; }
.selbox { position: absolute; left: 35px; top: -1px; width: 1128px; height: 26px; border: 2px solid #111; pointer-events: none; }
.handle { position: absolute; right: -4px; bottom: -4px; width: 5px; height: 5px; background: #111; border: 1px solid #fff; }
.cursor { position: absolute; left: 558px; top: 6px; }
.stub { height: 5px; }
.stub .rh { background: #e4e7ec; border: 0; }

.vscroll { flex: 1; background: #dde3ea; display: flex; flex-direction: column; align-items: center; padding: 0 3px; position: relative; border-left: 1px solid #c6cdd5; }
.vs-split { width: 14px; height: 5px; border: 1px solid #aab3bd; background: #f2f4f6; margin-top: 2px; }
.vs-up { width: 0; height: 0; border: 4px solid transparent; border-bottom: 5px solid #3f4a55; border-top: 0; margin-top: 6px; }
.vs-thumb { width: 15px; height: 11px; border: 1px solid #aab3bd; background: linear-gradient(#f5f7f9, #dfe4ea); margin-top: 3px; }
.vs-track { flex: 1; }
.vs-down { width: 0; height: 0; border: 4px solid transparent; border-top: 5px solid #3f4a55; border-bottom: 0; margin-bottom: 3px; }

/* sheet tabs */
.sheetbar { height: 13px; display: flex; align-items: stretch; background: linear-gradient(#dfe6ee, #d2dbe5); border-top: 1px solid #b8c0c9; border-bottom: 1px solid #9fa9b4; font-size: 9px; flex: none; color: #7d8790; line-height: 11px; }
.sheetnav { width: 44px; display: flex; gap: 3px; font-size: 7px; padding-left: 4px; color: #56616c; border-right: 1px solid #b8c0c9; }
.stab { white-space: nowrap; text-align: center; flex: none; }
.s-info { width: 65px; margin-left: 6px; border-right: 1px solid #bcc4cc; }
.s-up { width: 75px; background: #f7f9fb; color: #444; font-weight: 700; }
.s-a { width: 33px; margin-left: 3px; }
.s-time { width: 35px; margin-left: 4px; }
.s-new { width: 25px; margin-left: 5px; }
.hs-left { margin-left: 461px; display: flex; gap: 6px; font-size: 7px; align-items: center; color: #56616c; }
.hs-split { width: 5px; height: 10px; border: 1px solid #8a949e; background: #fafbfc; }
.hs-track { width: 331px; margin-left: 135px; border: 1px solid #aab3bd; background: linear-gradient(#eef1f5, #dbe1e8); text-align: center; font-size: 6px; line-height: 10px; color: #777; }
.hs-right { display: flex; gap: 3px; font-size: 7px; align-items: center; padding-left: 3px; color: #56616c; }

/* status */
.statusbar { height: 14px; display: flex; align-items: center; background: linear-gradient(#e8eef5, #c8d4e2); font-size: 8px; color: #7a8692; flex: none; }
.ready { width: 37px; padding-left: 5px; border-right: 1px solid #b0bac5; height: 14px; line-height: 14px; }
.stat-right { margin-left: auto; display: flex; align-items: center; padding-right: 12px; white-space: nowrap; }
.st-count { margin-left: 13px; }
.st-sum { margin-left: 12px; }
.st-sep { width: 1px; height: 12px; background: #aeb7c2; margin: 0 3px 0 8px; }
.view { width: 15px; height: 13px; display: flex; align-items: center; justify-content: center; }
.view.on { background: #f6dc8b; border: 1px solid #d5b450; }
.zoomv { margin: 0 5px 0 7px; }
.zbtn { width: 11px; height: 11px; border-radius: 50%; border: 1px solid #8c97a3; background: #f2f5f8; font-size: 10px; line-height: 8px; text-align: center; color: #555; }
.zline { width: 78px; height: 1px; background: #94a0ac; position: relative; margin: 0 2px; }
.zknob { position: absolute; left: 41px; top: -5px; width: 7px; height: 11px; background: #eef2f6; border: 1px solid #8c97a3; border-radius: 2px; }

/* bottom panel */
.panel { height: 160px; background: #ebebeb; display: flex; border-bottom: 2px solid #e0e0e0; align-items: flex-start; }
.kb { width: 435px; margin: 5px 0 0 13px; flex: none; display: flex; flex-direction: column; gap: 2.400px; }
.kr { display: flex; gap: 1.850px; height: 20px; }
.kr.fn { height: 21px; margin-bottom: 9.600px; gap: 13px; }
.fgroup { display: flex; gap: 1.850px; }
.fgroup + .fgroup { margin-left: 7px; }
.kr:nth-child(n+3) { padding-left: 2px; }
.kr.r5 { padding-left: 1px; }
.r5 .w55 { margin-right: 2px; }
.key { background: #000; color: #fff; border-radius: 3px; display: flex; align-items: center; justify-content: center; font: 400 15px/1 "DejaVu Sans", sans-serif; flex: none; box-shadow: 0 0 0 .5px #333; }
.yel { background: #f8f000; color: #111; box-shadow: 0 0 0 1px #222; }
.w28 { width: 28px; }
.w35 { width: 35px; }
.w36 { width: 36px; }
.w46 { width: 46px; }
.w55 { width: 55px; }
.w56 { width: 56px; }
.w76 { width: 76px; }
.space { width: 153px; font: 400 9px/1 "Open Sans", sans-serif; }
.esc { font-size: 10px; }
.f2d { font-size: 12px; letter-spacing: -.3px; }
.sym { justify-content: center; gap: 3px; }
.sym b { font-weight: 400; font-size: 15px; align-self: flex-end; padding-bottom: 2px; }
.sym i { font-size: 9px; align-self: flex-start; padding-top: 2px; }
.stack2 { font: 700 8.700px/10px "Liberation Sans", sans-serif; text-align: center; display: block; }
.wide { font: 400 13px/1 "DejaVu Sans", sans-serif; letter-spacing: 1px; -webkit-text-stroke: .3px currentColor; }
.back { flex-direction: column; font-size: 9.500px; letter-spacing: 1px; gap: 3px; }
.tabk { font-size: 11px; }
.caps { font-size: 8.500px; line-height: 10px; text-align: center; letter-spacing: .3px; }
.enter { font-size: 14.500px; }
.shift { flex-direction: column; font: 700 10.500px/1 "DejaVu Sans", sans-serif; letter-spacing: 3px; gap: 1px; -webkit-text-stroke: 0; }
.bottom { height: 21px; }
.kr.bottom { gap: 4px; }

.mid { width: 222px; margin: 5px 0 0 10px; flex: none; }
.goldrow { display: flex; align-items: center; height: 23px; margin-left: 19px; }
.blob { width: 55px; height: 23px; background: linear-gradient(#d9b24a, #b98c1e); border-radius: 9px; display: flex; align-items: center; padding-left: 14px; gap: 2px; flex: none; }
.blobwhite { width: 21px; height: 10px; background: #fff; display: flex; align-items: center; justify-content: center; flex: none; }
.mk { height: 6px; font: 700 5px/6px "DejaVu Sans", sans-serif; text-align: center; flex: none; }
.bk { width: 16px; background: #222; color: #eee; }
.gd { width: 16px; background: #a58a3c; color: #eee; }
.m1 { margin-left: 1px; }
.m2 { margin-left: 4px; }
.m3 { margin-left: 3px; }
.blob .gd { margin-right: -1px; }
.pill { width: 44px; height: 13px; background: #000; border-radius: 6px; margin-left: 4px; padding: 2px 11px; flex: none; }
.pill span { display: block; height: 9px; background: #fff; border-radius: 4px; }
.midgrid { display: flex; margin-top: 10px; }
.navcol { width: 103px; flex: none; }
.navgrid { display: grid; grid-template-columns: 28px 28px 29px; gap: 1px; grid-auto-rows: 17px; width: 88px; }
.nk { background: #000; color: #ddd; border-radius: 2px; font-size: 7px; line-height: 8px; text-align: center; display: flex; align-items: center; justify-content: center; font-family: "Open Sans", sans-serif; }
.nk.big { font-size: 11px; letter-spacing: .5px; }
.nk.home { font-size: 8.500px; }
.arrows { display: grid; grid-template-columns: 26px 27px 26px; gap: 1px; grid-auto-rows: 17px; margin: 24px 0 0 3px; width: 82px; }
.ak { background: #000; color: #fff; border-radius: 2px; display: flex; align-items: center; justify-content: center; }
.ak.yel { background: #f8f000; color: #111; box-shadow: 0 0 0 1px #222; }
.ak-up { grid-column: 2; }
.ak-l { grid-column: 1; grid-row: 2; }
.ak-d { grid-column: 2; grid-row: 2; }
.ak-r { grid-column: 3; grid-row: 2; }
.rot-l { transform: rotate(-90deg); }
.rot-r { transform: rotate(90deg); }
.rot-d { transform: rotate(180deg); }
.numpad { display: grid; grid-template-columns: 28px 28px 28px 28px; column-gap: 2px; row-gap: 1.750px; grid-auto-rows: 21px; width: 118px; margin-top: -1px; }
.pk { background: #000; color: #fff; border-radius: 2px; font: 400 14px/1 "Open Sans", sans-serif; display: flex; flex-direction: column; align-items: center; justify-content: center; }
.pk.lab { font: 400 13px "Liberation Sans", sans-serif; }
.pk small { font: 400 5px "Liberation Sans", sans-serif; }
.pk .del { font-size: 7.500px; }
.pk.sm2 { font-size: 8.500px; line-height: 10px; display: block; text-align: center; padding-top: 1px; }
.tall { grid-row: span 2; }
.ent { font-size: 5.500px; line-height: 7px; display: block; text-align: center; padding-top: 6px; }
.dbl { grid-column: span 2; }
.mouse { margin: 35px 0 0 20px; flex: none; }

.logger { width: 481px; height: 135px; margin: 10px 0 0 20px; border: 1px solid #343a40; background: #b6b7ba; flex: none; }
.lg-head { height: 12px; background: #0099dd; border-bottom: 1px solid #22333f; text-align: center; font-size: 12px; line-height: 11px; color: #0f2a42; font-family: "Open Sans", sans-serif; }
.lg-body { padding-top: 3px; display: flex; flex-direction: column; gap: 7px; }
.lg-row { height: 22px; display: flex; align-items: center; padding-left: 6px; }
.lk-ctrl { width: 37px; height: 21px; }
.lk-shift { width: 58px; height: 21px; }
.plus { width: 16px; height: 16px; flex: none; background: linear-gradient(#333, #333) center/16px 1px no-repeat, linear-gradient(#333, #333) center/1px 16px no-repeat; }
.p1 { margin: 0 21px 0 50px; }
.p2 { margin: 0 22px 0 27px; }
.hide { visibility: hidden; }
.lk-arrow { width: 27px; height: 17px; border-radius: 2px; }
.desc { width: 130px; height: 22px; background: #fff; border: 1px solid #888; margin-left: 67px; text-align: center; font-size: 9.800px; line-height: 10.500px; color: #2c2c2c; font-family: "Open Sans", sans-serif; white-space: nowrap; flex: none; }
```
